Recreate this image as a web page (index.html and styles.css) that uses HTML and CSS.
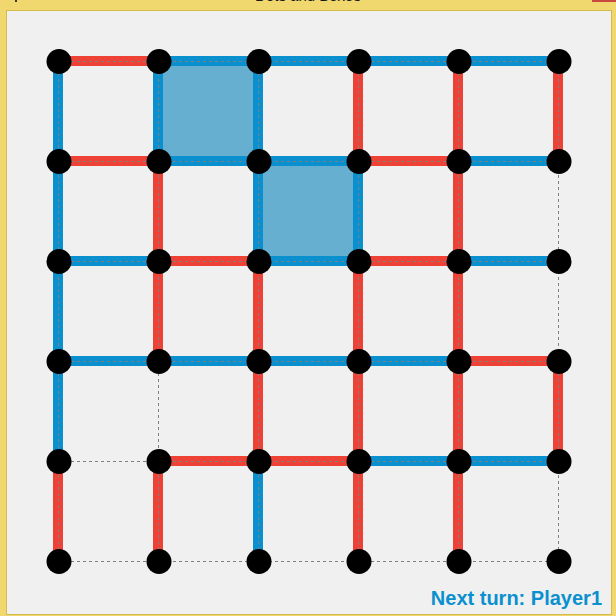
FILE: index.html
```html
<!DOCTYPE html>
<html>
<head>
<meta charset="utf-8">
<title>Dots and Boxes</title>
<link rel="stylesheet" href="styles.css">
</head>
<body>
<div class="window">
  <div class="titlebar">
    <div class="tb-left"><span class="app-icon"></span></div>
    <div class="title">Dots and Boxes</div>
    <div class="tb-right"><span class="close-btn"></span></div>
  </div>
  <div class="client">
    <svg class="board" width="604" height="576" viewBox="7 11 604 576" xmlns="http://www.w3.org/2000/svg">
      <g class="boxes">
        <rect x="159" y="61" width="100" height="100"/>
        <rect x="259" y="161" width="100" height="100"/>
      </g>
      <g class="hedges">
        <rect class="red" x="59" y="56" width="100" height="10"/>
        <rect class="blue" x="159" y="56" width="100" height="10"/>
        <rect class="blue" x="259" y="56" width="100" height="10"/>
        <rect class="blue" x="359" y="56" width="100" height="10"/>
        <rect class="blue" x="459" y="56" width="100" height="10"/>

        <rect class="red" x="59" y="156" width="100" height="10"/>
        <rect class="blue" x="159" y="156" width="100" height="10"/>
        <rect class="blue" x="259" y="156" width="100" height="10"/>
        <rect class="red" x="359" y="156" width="100" height="10"/>
        <rect class="blue" x="459" y="156" width="100" height="10"/>

        <rect class="blue" x="59" y="256" width="100" height="10"/>
        <rect class="red" x="159" y="256" width="100" height="10"/>
        <rect class="blue" x="259" y="256" width="100" height="10"/>
        <rect class="red" x="359" y="256" width="100" height="10"/>
        <rect class="blue" x="459" y="256" width="100" height="10"/>

        <rect class="blue" x="59" y="356" width="100" height="10"/>
        <rect class="blue" x="159" y="356" width="100" height="10"/>
        <rect class="blue" x="259" y="356" width="100" height="10"/>
        <rect class="blue" x="359" y="356" width="100" height="10"/>
        <rect class="red" x="459" y="356" width="100" height="10"/>

        <rect class="red" x="159" y="456" width="100" height="10"/>
        <rect class="red" x="259" y="456" width="100" height="10"/>
        <rect class="blue" x="359" y="456" width="100" height="10"/>
        <rect class="blue" x="459" y="456" width="100" height="10"/>
      </g>
      <g class="vedges">
        <rect class="blue" x="53" y="61" width="10" height="100"/>
        <rect class="blue" x="53" y="161" width="10" height="100"/>
        <rect class="blue" x="53" y="261" width="10" height="100"/>
        <rect class="blue" x="53" y="361" width="10" height="100"/>
        <rect class="red" x="53" y="461" width="10" height="100"/>

        <rect class="blue" x="153" y="61" width="10" height="100"/>
        <rect class="red" x="153" y="161" width="10" height="100"/>
        <rect class="red" x="153" y="261" width="10" height="100"/>
        <rect class="red" x="153" y="461" width="10" height="100"/>

        <rect class="blue" x="253" y="61" width="10" height="100"/>
        <rect class="blue" x="253" y="161" width="10" height="100"/>
        <rect class="red" x="253" y="261" width="10" height="100"/>
        <rect class="red" x="253" y="361" width="10" height="100"/>
        <rect class="blue" x="253" y="461" width="10" height="100"/>

        <rect class="red" x="353" y="61" width="10" height="100"/>
        <rect class="blue" x="353" y="161" width="10" height="100"/>
        <rect class="red" x="353" y="261" width="10" height="100"/>
        <rect class="red" x="353" y="361" width="10" height="100"/>
        <rect class="red" x="353" y="461" width="10" height="100"/>

        <rect class="red" x="453" y="61" width="10" height="100"/>
        <rect class="red" x="453" y="161" width="10" height="100"/>
        <rect class="red" x="453" y="261" width="10" height="100"/>
        <rect class="red" x="453" y="361" width="10" height="100"/>
        <rect class="red" x="453" y="461" width="10" height="100"/>

        <rect class="red" x="553" y="61" width="10" height="100"/>
        <rect class="red" x="553" y="361" width="10" height="100"/>
      </g>
      <path class="guides" d="M59 61.5H559 M59 161.5H559 M59 261.5H559 M59 361.5H559 M59 461.5H559 M59 561.5H559 M58.5 61V561 M158.5 61V561 M258.5 61V561 M358.5 61V561 M458.5 61V561 M558.5 61V561"/>
      <g class="dots">
        <circle cx="59" cy="61.5" r="12.5"/><circle cx="159" cy="61.5" r="12.5"/><circle cx="259" cy="61.5" r="12.5"/><circle cx="359" cy="61.5" r="12.5"/><circle cx="459" cy="61.5" r="12.5"/><circle cx="559" cy="61.5" r="12.5"/>
        <circle cx="59" cy="161.5" r="12.5"/><circle cx="159" cy="161.5" r="12.5"/><circle cx="259" cy="161.5" r="12.5"/><circle cx="359" cy="161.5" r="12.5"/><circle cx="459" cy="161.5" r="12.5"/><circle cx="559" cy="161.5" r="12.5"/>
        <circle cx="59" cy="261.5" r="12.5"/><circle cx="159" cy="261.5" r="12.5"/><circle cx="259" cy="261.5" r="12.5"/><circle cx="359" cy="261.5" r="12.5"/><circle cx="459" cy="261.5" r="12.5"/><circle cx="559" cy="261.5" r="12.5"/>
        <circle cx="59" cy="361.5" r="12.5"/><circle cx="159" cy="361.5" r="12.5"/><circle cx="259" cy="361.5" r="12.5"/><circle cx="359" cy="361.5" r="12.5"/><circle cx="459" cy="361.5" r="12.5"/><circle cx="559" cy="361.5" r="12.5"/>
        <circle cx="59" cy="461.5" r="12.5"/><circle cx="159" cy="461.5" r="12.5"/><circle cx="259" cy="461.5" r="12.5"/><circle cx="359" cy="461.5" r="12.5"/><circle cx="459" cy="461.5" r="12.5"/><circle cx="559" cy="461.5" r="12.5"/>
        <circle cx="59" cy="561.5" r="12.5"/><circle cx="159" cy="561.5" r="12.5"/><circle cx="259" cy="561.5" r="12.5"/><circle cx="359" cy="561.5" r="12.5"/><circle cx="459" cy="561.5" r="12.5"/><circle cx="559" cy="561.5" r="12.5"/>
      </g>
    </svg>
    <div class="status">Next turn: Player1</div>
  </div>
</div>
</body>
</html>
```

FILE: styles.css
```css
html, body {
  margin: 0;
  padding: 0;
  background: #f0d86e;
}

.window {
  width: 616px;
  height: 616px;
  background: #f0d86e;
  display: flex;
  flex-direction: column;
  overflow: hidden;
}

.titlebar {
  height: 10px;
  flex: none;
  overflow: hidden;
  display: grid;
  grid-template-columns: 1fr auto 1fr;
  font-family: "Liberation Sans", Arial, sans-serif;
}

.tb-left {
  display: flex;
  align-items: flex-start;
  padding-left: 15px;
}

.app-icon {
  width: 2px;
  height: 2px;
  background: #3a3a2a;
}

.title {
  font-size: 15px;
  line-height: 15px;
  margin-top: -12px;
  color: #1a1a1a;
  white-space: nowrap;
}

.tb-right {
  display: flex;
  justify-content: flex-end;
  align-items: flex-start;
}

.close-btn {
  width: 24px;
  height: 2px;
  background: #c8473e;
}

.client {
  flex: 1;
  margin: 0 4px 1px 6px;
  border: 1px solid #d5bb4c;
  background: #f0f0f0;
  display: flex;
  flex-direction: column;
}

.board {
  display: block;
  flex: none;
}

.boxes rect {
  fill: #66afd0;
}

.red {
  fill: #ef4237;
}

.blue {
  fill: #0a90cf;
}

.guides {
  fill: none;
  stroke: #808080;
  stroke-width: 1;
  stroke-dasharray: 3 3;
}

.dots circle {
  fill: #000000;
}

.status {
  text-align: right;
  padding-right: 9px;
  font-family: "Liberation Sans", Arial, sans-serif;
  font-weight: bold;
  font-size: 20px;
  line-height: 23px;
  color: #0a90cf;
}
```
